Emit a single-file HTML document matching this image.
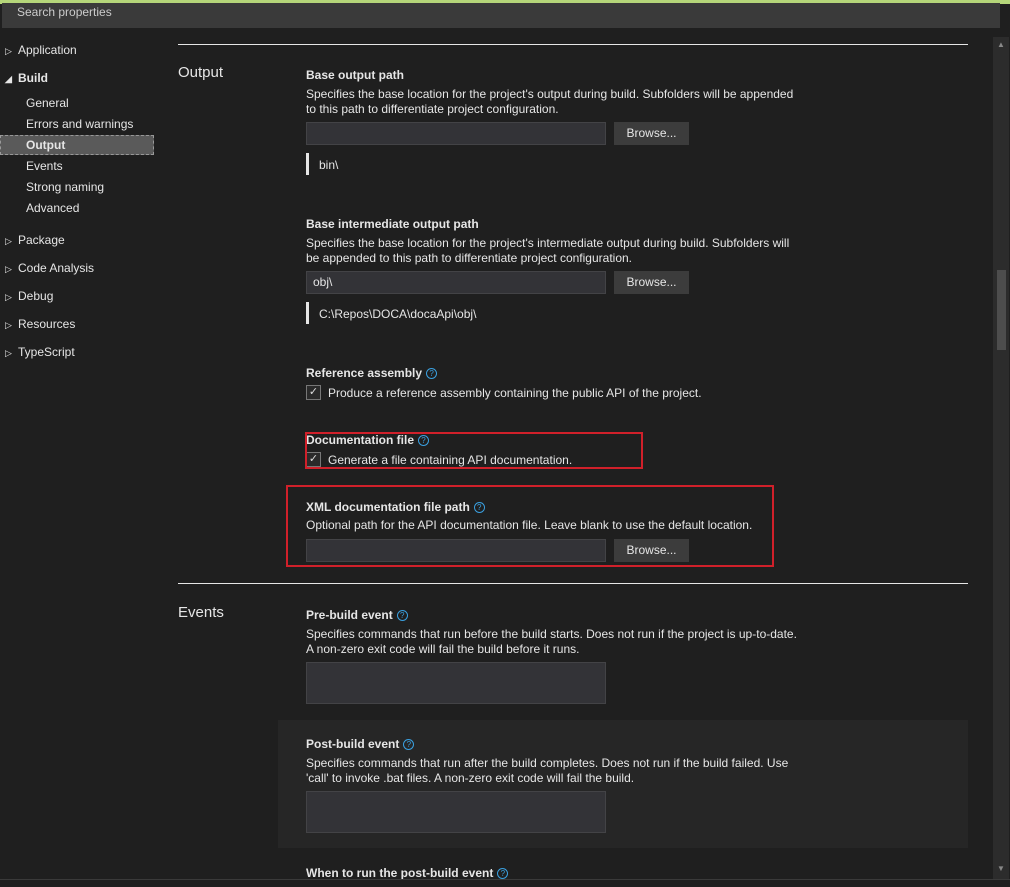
<!DOCTYPE html>
<html><head><style>
*{margin:0;padding:0;box-sizing:border-box}
body{width:1010px;height:887px;background:#1f1f1f;color:#e6e6e6;font-family:"Liberation Sans",sans-serif;font-size:12px;position:relative;overflow:hidden}
.a{position:absolute;white-space:nowrap}
.b{font-weight:bold}
.inp{position:absolute;background:#333337;border:1px solid #434346;width:300px;height:23px}
.btn{position:absolute;background:#3c3c3c;width:75px;height:23px;text-align:center;line-height:22px}
.q{display:inline-block;width:11px;height:11px;border:1px solid #3aa0e0;border-radius:50%;font-size:8px;line-height:9px;text-align:center;color:#3aa0e0;font-weight:normal;vertical-align:1px;margin-left:4px}
.cb{position:absolute;width:15px;height:15px;border:1px solid #777;background:#2a2a2a;font-size:11px;line-height:13px;text-align:center;color:#ddd}
.bar{position:absolute;width:3px;height:22px;background:#e6e6e6}
.t{font-size:9px;display:inline-block;width:13px}
</style></head><body>
<div class="a" style="left:0;top:0;width:1010px;height:4px;background:#b5d67a"></div>
<div class="a" style="left:2px;top:3px;width:998px;height:25px;background:#3a3a3a"></div>
<div class="a" style="left:17px;top:5px;color:#ccc">Search properties</div>

<div class="a" style="left:5px;top:43px"><span class="t">▷</span>Application</div>
<div class="a b" style="left:5px;top:71px"><span class="t">◢</span>Build</div>
<div class="a" style="left:26px;top:96px">General</div>
<div class="a" style="left:26px;top:117px">Errors and warnings</div>
<div class="a" style="left:0;top:135px;width:154px;height:20px;background:#5a5a5a;border:1px dashed #999"></div>
<div class="a b" style="left:26px;top:138px">Output</div>
<div class="a" style="left:26px;top:159px">Events</div>
<div class="a" style="left:26px;top:180px">Strong naming</div>
<div class="a" style="left:26px;top:201px">Advanced</div>
<div class="a" style="left:5px;top:233px"><span class="t">▷</span>Package</div>
<div class="a" style="left:5px;top:261px"><span class="t">▷</span>Code Analysis</div>
<div class="a" style="left:5px;top:289px"><span class="t">▷</span>Debug</div>
<div class="a" style="left:5px;top:317px"><span class="t">▷</span>Resources</div>
<div class="a" style="left:5px;top:345px"><span class="t">▷</span>TypeScript</div>

<div class="a" style="left:178px;top:44px;width:790px;height:1px;background:#e6e6e6"></div>
<div class="a" style="left:178px;top:64px;font-size:15px">Output</div>

<div class="a b" style="left:306px;top:68px">Base output path</div>
<div class="a" style="left:306px;top:87px;line-height:15px">Specifies the base location for the project's output during build. Subfolders will be appended<br>to this path to differentiate project configuration.</div>
<div class="inp" style="left:306px;top:122px"></div>
<div class="btn" style="left:614px;top:122px">Browse...</div>
<div class="bar" style="left:306px;top:153px"></div>
<div class="a" style="left:319px;top:158px">bin\</div>

<div class="a b" style="left:306px;top:217px">Base intermediate output path</div>
<div class="a" style="left:306px;top:236px;line-height:15px">Specifies the base location for the project's intermediate output during build. Subfolders will<br>be appended to this path to differentiate project configuration.</div>
<div class="inp" style="left:306px;top:271px;padding:3px 6px">obj\</div>
<div class="btn" style="left:614px;top:271px">Browse...</div>
<div class="bar" style="left:306px;top:302px"></div>
<div class="a" style="left:319px;top:307px">C:\Repos\DOCA\docaApi\obj\</div>

<div class="a b" style="left:306px;top:366px">Reference assembly<span class="q">?</span></div>
<div class="cb" style="left:306px;top:385px">✓</div>
<div class="a" style="left:328px;top:386px">Produce a reference assembly containing the public API of the project.</div>

<div class="a b" style="left:306px;top:433px">Documentation file<span class="q">?</span></div>
<div class="cb" style="left:306px;top:452px">✓</div>
<div class="a" style="left:328px;top:453px">Generate a file containing API documentation.</div>
<div class="a" style="left:305px;top:432px;width:338px;height:37px;border:2px solid #d0202a"></div>

<div class="a" style="left:286px;top:485px;width:488px;height:82px;border:2px solid #d0202a"></div>
<div class="a b" style="left:306px;top:500px">XML documentation file path<span class="q">?</span></div>
<div class="a" style="left:306px;top:518px">Optional path for the API documentation file. Leave blank to use the default location.</div>
<div class="inp" style="left:306px;top:539px"></div>
<div class="btn" style="left:614px;top:539px">Browse...</div>

<div class="a" style="left:178px;top:583px;width:790px;height:1px;background:#e6e6e6"></div>
<div class="a" style="left:178px;top:604px;font-size:15px">Events</div>

<div class="a b" style="left:306px;top:608px">Pre-build event<span class="q">?</span></div>
<div class="a" style="left:306px;top:627px;line-height:15px">Specifies commands that run before the build starts. Does not run if the project is up-to-date.<br>A non-zero exit code will fail the build before it runs.</div>
<div class="inp" style="left:306px;top:662px;height:42px"></div>

<div class="a" style="left:278px;top:720px;width:690px;height:128px;background:#262626"></div>
<div class="a b" style="left:306px;top:737px">Post-build event<span class="q">?</span></div>
<div class="a" style="left:306px;top:756px;line-height:15px">Specifies commands that run after the build completes. Does not run if the build failed. Use<br>'call' to invoke .bat files. A non-zero exit code will fail the build.</div>
<div class="inp" style="left:306px;top:791px;height:42px"></div>

<div class="a b" style="left:306px;top:866px">When to run the post-build event<span class="q">?</span></div>

<div class="a" style="left:993px;top:37px;width:16px;height:842px;background:#2c2c2c"></div>
<div class="a" style="left:997px;top:40px;color:#888;font-size:8px">▲</div>
<div class="a" style="left:997px;top:270px;width:9px;height:80px;background:#4d4d4d"></div>
<div class="a" style="left:997px;top:864px;color:#888;font-size:8px">▼</div>
<div class="a" style="left:0;top:879px;width:1010px;height:1px;background:#3a3a3a"></div>
</body></html>
